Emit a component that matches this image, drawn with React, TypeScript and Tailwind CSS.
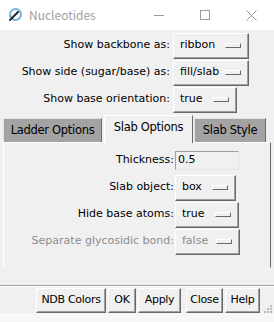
import React from 'react'

const body = { fontFamily: '"DejaVu Sans", Tahoma, sans-serif' }

function MenuButton({ value, w, disabled }: { value: string; w: string; disabled?: boolean }) {
  return (
    <div
      className={`${w} h-[26px] flex items-center justify-between pl-[6px] pr-[7px] bg-[#f0f0f0] border border-t-white border-l-white border-r-[#696969] border-b-[#696969] shadow-[inset_-1px_-1px_0_#a0a0a0] ${disabled ? 'text-[#8d8d8d]' : 'text-black'}`}
    >
      <span>{value}</span>
      <span className="w-[16px] h-[5px] bg-[#f0f0f0] border border-t-white border-l-white border-r-[#696969] border-b-[#696969]" />
    </div>
  )
}

function Row({ label, children, disabled }: { label: string; children: React.ReactNode; disabled?: boolean }) {
  return (
    <div className="flex items-center h-[27px]">
      <div className={`w-[171px] text-right pr-[1px] ${disabled ? 'text-[#8d8d8d]' : ''}`}>{label}</div>
      <div className="pl-[2px]">{children}</div>
    </div>
  )
}

function Btn({ label, w }: { label: string; w: string }) {
  return (
    <div className={`${w} h-[25px] flex items-center justify-center tracking-[-0.3px] bg-[#f0f0f0] border border-t-white border-l-white border-r-[#696969] border-b-[#696969] shadow-[inset_-1px_-1px_0_#a0a0a0]`}>
      {label}
    </div>
  )
}

export default function App() {
  return (
    <div className="w-[274px] h-[322px] bg-[#f7f7f7] overflow-hidden text-[11px] text-black" style={body}>
      {/* title bar */}
      <div className="h-[30px] bg-white flex items-center">
        <svg width="16" height="16" viewBox="0 0 16 16" className="ml-[7px]">
          <circle cx="8.5" cy="7.5" r="5.5" fill="none" stroke="#6cb4dc" strokeWidth="2" />
          <path d="M3 13 L11 5" stroke="#222" strokeWidth="2" strokeLinecap="round" />
          <path d="M2 14 L4 12" stroke="#555" strokeWidth="1" />
        </svg>
        <span className="ml-[6px] text-[12px] text-[#a0a0a0]" style={{ fontFamily: '"Noto Sans CJK SC", "Noto Sans", sans-serif' }}>
          Nucleotides
        </span>
        <div className="ml-auto flex items-center">
          <div className="w-[46px] h-[30px] flex items-center justify-center">
            <div className="w-[10px] h-px bg-[#999]" />
          </div>
          <div className="w-[46px] h-[30px] flex items-center justify-center">
            <div className="w-[10px] h-[10px] border border-[#999]" />
          </div>
          <div className="w-[46px] h-[30px] flex items-center justify-center">
            <svg width="11" height="11" viewBox="0 0 11 11">
              <path d="M0.5 0.5 L10.5 10.5 M10.5 0.5 L0.5 10.5" stroke="#999" strokeWidth="1" />
            </svg>
          </div>
        </div>
      </div>

      <div className="h-[283px] bg-[#f0f0f0] flex flex-col">
        <div className="pt-[2px] flex flex-col">
          <Row label="Show backbone as:"><MenuButton value="ribbon" w="w-[76px]" /></Row>
          <Row label="Show side (sugar/base) as:"><MenuButton value="fill/slab" w="w-[76px]" /></Row>
          <Row label="Show base orientation:"><MenuButton value="true" w="w-[64px]" /></Row>
        </div>

        {/* tabs */}
        <div className="mt-[2px] pl-[3px] flex items-end h-[27px] text-[11.5px] tracking-[-0.3px]">
          <div className="w-[99px] h-[24px] pt-px flex items-center justify-center bg-[#a3a3a3] border border-t-[#e3e3e3] border-l-[#e3e3e3] border-r-[#696969] border-b-0">
            Ladder Options
          </div>
          <div className="ml-[2px] w-[89px] h-[28px] mb-[-1px] pb-[3px] flex items-center justify-center bg-[#f0f0f0] border border-t-white border-l-white border-r-[#696969] border-b-0 relative z-10">
            Slab Options
          </div>
          <div className="ml-px w-[72px] h-[24px] pt-px flex items-center justify-center bg-[#a3a3a3] border border-t-[#e3e3e3] border-l-[#e3e3e3] border-r-[#696969] border-b-0">
            Slab Style
          </div>
        </div>
        <div className="ml-[3px] w-[268px] h-[126px] border border-t-white border-l-white border-r-[#696969] border-b-[#f0f0f0] pt-[4px]">
          <div className="flex flex-col">
            <div className="flex items-center h-[27px]">
              <div className="w-[170px] text-right">Thickness:</div>
              <div className="ml-[1px] w-[64px] h-[19px] flex items-center pl-[2px] bg-[#f0f0f0] border border-[#a0a0a0] border-r-[#e3e3e3] border-b-[#e3e3e3]">0.5</div>
            </div>
            <div className="flex items-center h-[27px]">
              <div className="w-[170px] text-right">Slab object:</div>
              <div className="ml-px"><MenuButton value="box" w="w-[61px]" /></div>
            </div>
            <div className="flex items-center h-[27px]">
              <div className="w-[170px] text-right">Hide base atoms:</div>
              <div className="ml-px"><MenuButton value="true" w="w-[64px]" /></div>
            </div>
            <div className="flex items-center h-[27px]">
              <div className="w-[170px] text-right text-[#8d8d8d]">Separate glycosidic bond:</div>
              <div className="ml-px"><MenuButton value="false" w="w-[65px]" disabled /></div>
            </div>
          </div>
        </div>

        {/* separator */}
        <div className="mt-[17px] h-[2px] border-t border-t-[#a0a0a0] border-b border-b-white" />

        <div className="mt-px flex items-start relative">
          <div className="ml-[36px] flex gap-[2px]">
            <Btn label="NDB Colors" w="w-[70px]" />
            <Btn label="OK" w="w-[28px]" />
            <Btn label="Apply" w="w-[43px]" />
            <div className="w-[1px]" />
            <Btn label="Close" w="w-[37px]" />
            <Btn label="Help" w="w-[35px]" />
          </div>
          <svg width="9" height="9" viewBox="0 0 9 9" className="absolute right-[2px] top-[16px]">
            <g fill="#b8b8b8">
              <rect x="7" y="1" width="2" height="2" />
              <rect x="4" y="4" width="2" height="2" />
              <rect x="7" y="4" width="2" height="2" />
              <rect x="1" y="7" width="2" height="2" />
              <rect x="4" y="7" width="2" height="2" />
              <rect x="7" y="7" width="2" height="2" />
            </g>
          </svg>
        </div>
      </div>
    </div>
  )
}
